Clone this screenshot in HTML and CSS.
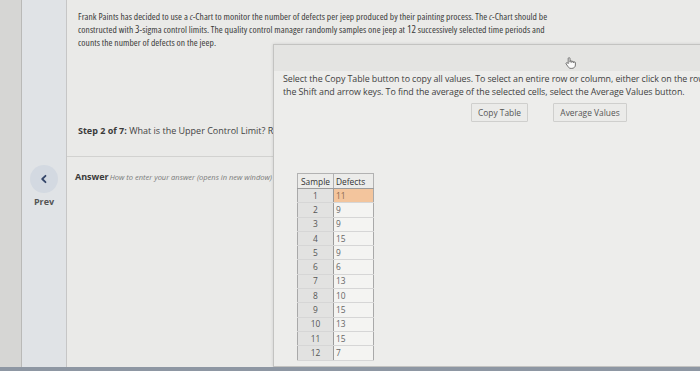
FILE: index.html
```html
<!DOCTYPE html>
<html lang="en">
<head>
<meta charset="utf-8">
<title>c-Chart question</title>
<link rel="stylesheet" href="styles.css">
</head>
<body>
<div class="page">
  <div class="screen">
    <div class="edge"></div>
    <nav class="nav">
      <button class="prev-btn" aria-label="Previous">
        <svg width="10" height="10" viewBox="0 0 10 10"><path d="M6.5 1.8 3.2 5l3.3 3.2" fill="none" stroke="#34466a" stroke-width="1.8" stroke-linecap="round" stroke-linejoin="round"/></svg>
      </button>
      <span class="prev-label">Prev</span>
    </nav>
    <main class="main">
      <p class="question">Frank Paints has decided to use a <i>c</i>-Chart to monitor the number of defects per jeep produced by their painting process. The <i>c</i>-Chart should be<br>constructed with <span class="num">3</span>-sigma control limits. The quality control manager randomly samples one jeep at <span class="num">12</span> successively selected time periods and<br>counts the number of defects on the jeep.</p>
      <div class="step"><b>Step 2 of 7:</b> What is the Upper Control Limit? Round your answer to three decimal places.</div>
      <div class="answer"><b>Answer</b><i>How to enter your answer (opens in new window)</i></div>

      <section class="popup">
        <div class="popup-head">
          <svg class="hand" width="11" height="12" viewBox="0 0 11 12"><path d="M3.2 6.5V1.6a.9.9 0 0 1 1.8 0V5.2M5 4.6a.9.9 0 0 1 1.8 0v1M6.8 5.2a.9.9 0 0 1 1.8 0v.6M8.6 5.8a.9.9 0 0 1 1.8 0V8c0 2-1.6 3.4-3.6 3.4H6c-1.4 0-2.3-.6-3-1.8L1.2 7a.9.9 0 0 1 1.5-1l.5.6" fill="#fafafa" stroke="#555" stroke-width=".8" stroke-linejoin="round"/></svg>
        </div>
        <div class="popup-body">
          <p class="hint">Select the Copy Table button to copy all values. To select an entire row or column, either click on the row<br>the Shift and arrow keys. To find the average of the selected cells, select the Average Values button.</p>
          <div class="actions">
            <button class="btn btn-copy">Copy Table</button>
            <button class="btn btn-avg">Average Values</button>
          </div>
          <table class="data">
            <thead><tr><th>Sample</th><th>Defects</th></tr></thead>
            <tbody>
              <tr><td>1</td><td class="sel">11</td></tr>
              <tr><td>2</td><td>9</td></tr>
              <tr><td>3</td><td>9</td></tr>
              <tr><td>4</td><td>15</td></tr>
              <tr><td>5</td><td>9</td></tr>
              <tr><td>6</td><td>6</td></tr>
              <tr><td>7</td><td>13</td></tr>
              <tr><td>8</td><td>10</td></tr>
              <tr><td>9</td><td>15</td></tr>
              <tr><td>10</td><td>13</td></tr>
              <tr><td>11</td><td>15</td></tr>
              <tr><td>12</td><td>7</td></tr>
            </tbody>
          </table>
        </div>
      </section>
    </main>
  </div>
  <div class="bottom"></div>
</div>
</body>
</html>
```

FILE: styles.css
```css
* { box-sizing: border-box; }
html, body { margin: 0; padding: 0; }
body {
  width: 700px;
  height: 371px;
  overflow: hidden;
  font-family: "Open Sans", "DejaVu Sans", sans-serif;
  color: #3c3c3c;
  background: #e9e9e7;
}
.page {
  width: 700px;
  height: 371px;
  display: flex;
  flex-direction: column;
  overflow: hidden;
}
.screen {
  flex: 1;
  display: flex;
  min-height: 0;
}
.bottom {
  height: 4px;
  background: #8e97a3;
}
.edge {
  width: 22px;
  background: #d6d6d4;
  border-right: 1px solid #b9b9b7;
}
.nav {
  width: 45px;
  background: #e0e3e6;
  border-right: 1px solid #c6c6c6;
  display: flex;
  flex-direction: column;
  align-items: center;
  padding-top: 165px;
}
.prev-btn {
  width: 28px;
  height: 28px;
  border-radius: 50%;
  border: none;
  padding: 0;
  background: #d3d9e1;
  display: flex;
  align-items: center;
  justify-content: center;
}
.prev-label {
  margin-top: 2px;
  font-size: 9px;
  font-weight: 700;
  color: #555;
  line-height: 14px;
}
.main {
  flex: 1;
  position: relative;
  background: #eaeae8;
  overflow: hidden;
}
.question {
  margin: 0;
  padding: 10px 0 0 11px;
  font-size: 9.5px;
  line-height: 13px;
  font-stretch: 75%;
  letter-spacing: 0.05px;
  color: #3a3a3a;
  white-space: nowrap;
}
.question .num { font-size: 10.5px; }
.step {
  margin-top: 75px;
  padding: 0 0 19px 11px;
  font-size: 9px;
  line-height: 13px;
  color: #444;
  white-space: nowrap;
  border-bottom: 1px solid #d2d2d0;
}
.step b { font-weight: 700; color: #3a3a3a; }
.answer {
  margin-top: 11px;
  padding-left: 8px;
  line-height: 13px;
  white-space: nowrap;
}
.answer b {
  font-size: 9px;
  font-weight: 700;
  color: #3a3a3a;
}
.answer i {
  font-size: 7.5px;
  color: #7a7a7a;
  margin-left: 1px;
}
.popup {
  position: absolute;
  left: 206px;
  top: 44px;
  bottom: 0;
  width: 560px;
  background: #ededeb;
  border: 1px solid #c3c3c1;
  box-shadow: 0 0 3px rgba(0,0,0,0.12);
}
.popup-head {
  height: 26px;
  background: #e4e4e2;
  position: relative;
}
.hand {
  position: absolute;
  left: 291px;
  top: 12px;
}
.popup-body {
  padding: 1px 0 0 9px;
}
.hint {
  margin: 0;
  font-size: 8.9px;
  line-height: 13px;
  letter-spacing: -0.08px;
  color: #3f3f3f;
  white-space: nowrap;
}
.actions {
  display: flex;
  gap: 25px;
  margin-top: 5px;
  padding-left: 188px;
}
.btn {
  height: 19px;
  padding: 0;
  font-family: "Open Sans", "DejaVu Sans", sans-serif;
  font-size: 8.4px;
  color: #555;
  background: #ebebe9;
  border: 1px solid #cfcfcd;
  border-radius: 1px;
}
.btn-copy { width: 57px; }
.btn-avg { width: 74px; }
.data {
  margin: 51px 0 0 14px;
  border-collapse: collapse;
  border: 1px solid #a9a9a9;
  font-size: 8.4px;
  color: #555;
}
.data th {
  height: 15px;
  padding: 0 2px;
  font-weight: 400;
  color: #333;
  background: #ececea;
  border: 1px solid #b2b2b2;
  border-bottom: 1px solid #9c9c9c;
}
.data th:first-child { width: 36px; }
.data th:last-child { width: 40px; text-align: left; }
.data td {
  height: 14.3px;
  padding: 0 2px;
  line-height: 12px;
  border-bottom: 1px solid #d6d6d6;
}
.data td:first-child {
  text-align: center;
  background: #e2e2e1;
  border-right: 1px solid #9a9a9a;
  color: #555;
}
.data td:last-child {
  text-align: left;
  background: #f4f4f2;
  color: #666;
}
.data td.sel {
  background: #f3c59d;
  color: #8a6a50;
}
```
